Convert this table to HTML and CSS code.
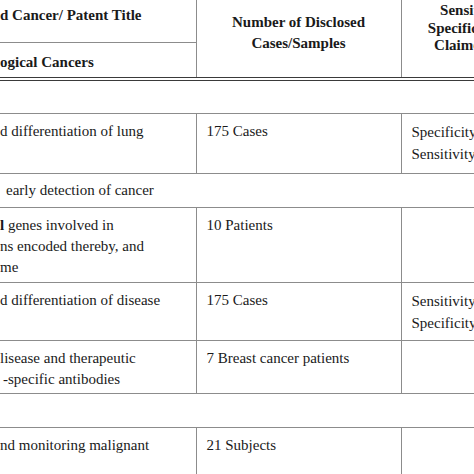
FILE: index.html
```html
<!DOCTYPE html>
<html>
<head>
<meta charset="utf-8">
<link rel="stylesheet" href="styles.css">
</head>
<body>
<table class="patents">
  <colgroup>
    <col class="c1">
    <col class="c2">
    <col class="c3">
  </colgroup>
  <thead>
    <tr class="h-top">
      <th class="h-title">d Cancer/ Patent Title</th>
      <th class="h-cases" rowspan="2">Number of Disclosed<br>Cases/Samples</th>
      <th class="h-claim" rowspan="2">Sensitivity/<br>Specificity (%)<br>Claimed (%)</th>
    </tr>
    <tr class="h-bottom">
      <th class="h-group">ogical Cancers</th>
    </tr>
  </thead>
  <tbody>
    <tr class="section"><td colspan="3"></td></tr>
    <tr class="r-lung">
      <td class="t1">d differentiation of lung</td>
      <td>175 Cases</td>
      <td><p>Specificity</p><p>Sensitivity</p></td>
    </tr>
    <tr class="section"><td colspan="3" class="sec-text">early detection of cancer</td></tr>
    <tr class="r-genes">
      <td class="t1"><b>l</b> genes involved in<br>ns encoded thereby, and<br>me</td>
      <td>10 Patients</td>
      <td></td>
    </tr>
    <tr class="r-disease">
      <td class="t1">d differentiation of disease</td>
      <td>175 Cases</td>
      <td><p>Sensitivity</p><p>Specificity</p></td>
    </tr>
    <tr class="r-anti">
      <td class="t1">lisease and therapeutic<br><span class="indent">-specific antibodies</span></td>
      <td>7 Breast cancer patients</td>
      <td></td>
    </tr>
    <tr class="section"><td colspan="3"></td></tr>
    <tr class="r-malig">
      <td class="t1">nd monitoring malignant</td>
      <td>21 Subjects</td>
      <td></td>
    </tr>
  </tbody>
</table>
</body>
</html>
```

FILE: styles.css
```css
html, body {
  margin: 0;
  padding: 0;
  background: #fff;
  overflow: hidden;
}

body {
  width: 474px;
  height: 474px;
  font-family: "Liberation Serif", "Times New Roman", serif;
  font-size: 15px;
  color: #1a1a1a;
}

.patents {
  border-collapse: collapse;
  table-layout: fixed;
  width: 550px;
}

.c1 { width: 196px; }
.c2 { width: 205px; }
.c3 { width: 149px; }

.patents th,
.patents td {
  padding: 0;
  border: 1px solid #8c8c8c;
  vertical-align: top;
  line-height: 21px;
}

.patents tr > :first-child {
  border-left: none;
}

.patents th {
  font-weight: bold;
}

.h-top { height: 42px; }
.h-bottom { height: 37px; }

.patents th.h-title {
  text-align: left;
  padding-top: 5px;
  border-top: none;
}

.patents th.h-group {
  text-align: left;
  padding-top: 9px;
}

.patents th.h-cases {
  text-align: center;
  padding-top: 12px;
  line-height: 20.5px;
  border-top: none;
}

.patents th.h-claim {
  text-align: center;
  padding-top: 2px;
  line-height: 17.5px;
  border-top: none;
}

.patents thead tr:last-child th,
.patents thead th.h-cases,
.patents thead th.h-claim {
  border-bottom: 4px double #3a3a3a;
}

.section { height: 34px; }

.patents td {
  padding: 7px 10px 0 10px;
}

.patents td.t1 {
  padding-left: 0;
}

.patents .section td {
  padding: 0;
  vertical-align: middle;
}

.patents .section td.sec-text {
  padding-left: 6px;
}

.patents td p {
  margin: 0;
  line-height: 22px;
}

.indent {
  padding-left: 3px;
}

.r-lung { height: 60px; }
.r-genes { height: 75px; }
.r-disease { height: 58px; }
.r-anti { height: 53px; }
.r-malig { height: 80px; }
```
